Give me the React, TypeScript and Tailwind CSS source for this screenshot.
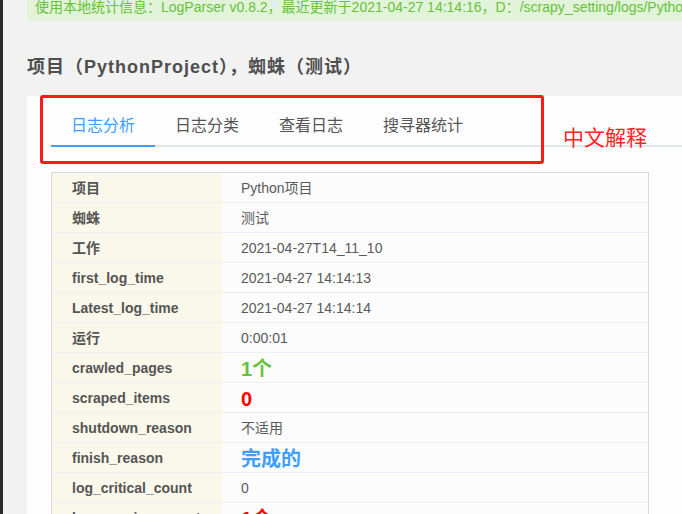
import React from "react";

const FONT = { fontFamily: '"Liberation Sans", "Noto Sans CJK SC", sans-serif' };

type Row = { k: string; v: React.ReactNode };

const rows: Row[] = [
  { k: "项目", v: "Python项目" },
  { k: "蜘蛛", v: "测试" },
  { k: "工作", v: "2021-04-27T14_11_10" },
  { k: "first_log_time", v: "2021-04-27 14:14:13" },
  { k: "Latest_log_time", v: "2021-04-27 14:14:14" },
  { k: "运行", v: "0:00:01" },
  { k: "crawled_pages", v: <span className="text-[20px] font-bold text-[#67c23a]">1个</span> },
  { k: "scraped_items", v: <span className="text-[20px] font-bold text-[#ff0000]">0</span> },
  { k: "shutdown_reason", v: "不适用" },
  { k: "finish_reason", v: <span className="text-[20px] font-bold text-[#409eff]">完成的</span> },
  { k: "log_critical_count", v: "0" },
  { k: "log_warning_count", v: <span className="text-[20px] font-bold text-[#ff0000]">1个</span> },
  { k: "log_redirect_count", v: "0" },
];

const tabs = ["日志分析", "日志分类", "查看日志", "搜寻器统计"];

export default function App() {
  return (
    <div className="flex h-[514px] w-[682px] overflow-hidden bg-[#f2f2f2]" style={FONT}>
      <div className="w-[3px] shrink-0 bg-[#2b2b2b]" />
      <div className="shrink-0 pl-6">
        <div className="h-[21px] w-[700px] overflow-hidden whitespace-nowrap rounded-b-[4px] bg-[#e1f3d8] pl-2 text-[14px] leading-[14px] text-[#67c23a]">
          使用本地统计信息：LogParser v0.8.2，最近更新于2021-04-27 14:14:16，D：/scrapy_setting/logs/PythonProject/测试/2021-04-27T14_11_10.log
        </div>
        <h2 className="mt-[34px] h-[24px] whitespace-nowrap text-[18px] font-bold leading-[24px] tracking-[1px] text-[#4f4f4f]">
          项目（PythonProject），蜘蛛（测试）
        </h2>
        <div className="relative mt-[17px] w-[700px] bg-[#fdfdfd] pl-6 pt-[10px] pb-6">
          <div className="relative flex">
            <div className="absolute bottom-0 left-0 right-0 h-[2px] bg-[#e4e7ed]" />
            {tabs.map((t, i) => (
              <div
                key={t}
                className={
                  i === 0
                    ? "relative h-[41px] px-5 text-[16px] leading-[40px] text-[#409eff]"
                    : "relative h-[41px] px-5 text-[16px] leading-[40px] text-[#555]"
                }
              >
                {t}
                {i === 0 && <span className="absolute bottom-0 left-0 right-0 h-[2px] bg-[#409eff]" />}
              </div>
            ))}
          </div>

          <div className="mt-[25px] w-[598px] border border-b-0 border-[#d9d9d9]">
            {rows.map((r) => (
              <div key={r.k} className="flex h-[30px] border-b border-[#ebeef5]">
                <div className="flex w-[170px] shrink-0 items-center bg-[#faf8ea] pl-5 pt-[2px] text-[14px] font-bold text-[#555]">
                  {r.k}
                </div>
                <div className="flex flex-1 items-center bg-[#fcfcfd] pl-[19px] pt-[2px] text-[14px] text-[#5a5a5a]">
                  {r.v}
                </div>
              </div>
            ))}
          </div>

          <div className="absolute left-[13px] top-[-1px] h-[69px] w-[504px] rounded-[3px] border-[3px] border-[#ff1a1a]" />
          <div className="absolute left-[536px] top-[31px] whitespace-nowrap text-[21px] leading-[21px] text-[#ff2424]">
            中文解释
          </div>
        </div>
      </div>
    </div>
  );
}
